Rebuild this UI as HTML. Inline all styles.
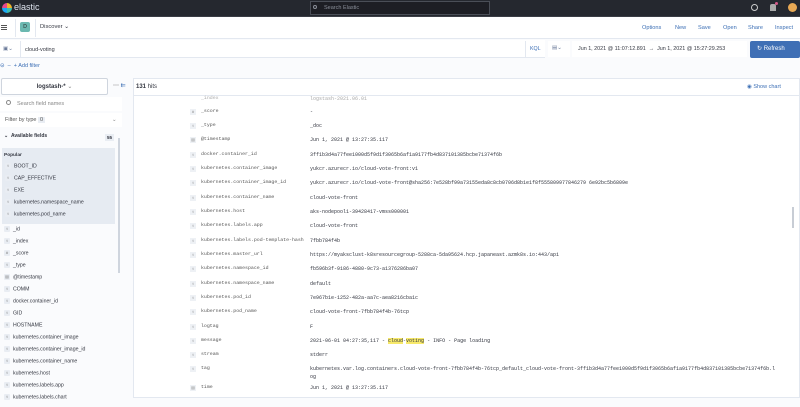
<!DOCTYPE html>
<html><head><meta charset="utf-8"><style>
*{margin:0;padding:0;box-sizing:border-box}
body{width:800px;height:407px;overflow:hidden;background:#fafbfd;font-family:"Liberation Sans",sans-serif;position:relative;color:#343741}
.a{position:absolute;white-space:nowrap}
.top{left:0;top:0;width:800px;height:17px;background:#25282f;border-bottom:1px solid #3a3d45}
.hdr{left:0;top:17px;width:800px;height:22px;background:#fff;border-bottom:1px solid #e3e8f0}
.lnk{color:#3c6fb5;font-size:5.6px;top:25px}
.fi{font-size:5.2px;color:#343741;left:14px}
.ic{display:inline-block;width:6px;height:6px;background:#e9edf3;border-radius:1px;font-size:4px;color:#777;text-align:center;line-height:6px;margin-right:3px;vertical-align:middle}
.fn{font-family:"Liberation Mono",monospace;font-size:4.9px;color:#555;left:201px}
.fv{font-family:"Liberation Mono",monospace;font-size:5px;color:#343741;left:310px}
.ri{left:190px;width:6px;height:6px;background:#eef1f5;font-size:4px;color:#888;text-align:center;line-height:6px}
</style></head><body>
<div class="a top"></div>
<div class="a" style="left:2px;top:3px;width:10px;height:10px;border-radius:50%;background:conic-gradient(#f0b429 0 25%,#3ebeb0 0 50%,#1ba9f5 0 75%,#e8478b 0)"></div>
<div class="a" style="left:14px;top:2px;color:#dfe5ef;font-size:9px">elastic</div>
<div class="a" style="left:310px;top:1px;width:180px;height:14px;border:1px solid #4a4e57;background:#1d1e24;color:#8a8f99;font-size:5.5px;padding:3px 0 0 13px">Search Elastic</div>
<div class="a" style="left:313px;top:5px;width:4px;height:4px;border:1px solid #8a8f99;border-radius:50%"></div>
<div class="a" style="left:751px;top:4px;width:7px;height:7px;border:1px solid #ccc;border-radius:50%"></div>
<div class="a" style="left:770px;top:4px;width:6px;height:7px;background:#aaa;border-radius:2px 2px 0 0"></div>
<div class="a" style="left:775px;top:2px;width:3px;height:3px;background:#d55a8a;border-radius:50%"></div>
<div class="a" style="left:788px;top:3px;width:9px;height:9px;background:#e7a854;border-radius:50%"></div>
<div class="a hdr"></div>
<div class="a" style="left:1px;top:25px;width:6px;height:1px;background:#555;box-shadow:0 2px 0 #555,0 4px 0 #555"></div>
<div class="a" style="left:15px;top:19px;width:1px;height:18px;background:#e3e8f0"></div>
<div class="a" style="left:20px;top:22px;width:10px;height:10px;background:#6bb8b0;border-radius:2px;font-size:5px;text-align:center;line-height:10px;color:#222">D</div>
<div class="a" style="left:35px;top:19px;width:1px;height:18px;background:#e3e8f0"></div>
<div class="a" style="left:40px;top:24px;font-size:5.8px;color:#343741">Discover ⌄</div>
<div class="a lnk" style="left:642px">Options</div>
<div class="a lnk" style="left:675px">New</div>
<div class="a lnk" style="left:698px">Save</div>
<div class="a lnk" style="left:723px">Open</div>
<div class="a lnk" style="left:748px">Share</div>
<div class="a lnk" style="left:775px">Inspect</div>
<div class="a" style="left:0;top:40px;width:545px;height:18px;background:#fff;border-bottom:1px solid #e3e8f0"></div>
<div class="a" style="left:3px;top:46px;font-size:5.5px;color:#6a7a99">▣⌄</div>
<div class="a" style="left:20px;top:41px;width:1px;height:16px;background:#e3e8f0"></div>
<div class="a" style="left:25px;top:47px;font-size:5.5px">cloud-voting</div>
<div class="a" style="left:525px;top:41px;width:20px;height:16px;border-left:1px solid #e3e8f0;font-size:5.3px;color:#3c6fb5;padding:5px 0 0 4px">KQL</div>
<div class="a" style="left:548px;top:41px;width:22px;height:16px;background:#fff;font-size:5.5px;color:#6a7a99;padding:4px 0 0 4px">▤⌄</div>
<div class="a" style="left:572px;top:41px;width:175px;height:16px;background:#fff;font-size:5.4px;padding:5px 0 0 6px;color:#343741">Jun 1, 2021 @ 11:07:12.891 &nbsp;→&nbsp; Jun 1, 2021 @ 15:27:29.253</div>
<div class="a" style="left:750px;top:41px;width:50px;height:17px;background:#3f6fb5;border-radius:2px;color:#fff;font-size:6px;padding:4px 0 0 7px">↻ Refresh</div>
<div class="a" style="left:0;top:63px;font-size:5.5px;color:#3c6fb5">⊝ &nbsp;– &nbsp;+ Add filter</div>
<div class="a" style="left:1px;top:78px;width:107px;height:17px;background:#fff;border:1px solid #cfd5de;border-radius:2px;font-size:6px;font-weight:bold;text-align:center;padding-top:4px">logstash-* <span style="font-weight:normal;color:#888">⌄</span></div>
<div class="a" style="left:113px;top:82px;font-size:6px;color:#555">⋯ <span style="color:#3c6fb5">⇇</span></div>
<div class="a" style="left:0;top:97px;width:122px;height:14px;background:#fff;font-size:5.5px;color:#888;padding:4px 0 0 17px">Search field names</div>
<div class="a" style="left:6px;top:100px;width:5px;height:5px;border:1px solid #888;border-radius:50%"></div>
<div class="a" style="left:0;top:113px;width:122px;height:14px;background:#fff;font-size:5.5px;color:#555;padding:4px 0 0 5px">Filter by type <span style="background:#e9edf3;padding:0 2px">0</span><span style="position:absolute;left:112px;color:#888">⌄</span></div>
<div class="a" style="left:4px;top:133px;font-size:5px;font-weight:bold">⌄ &nbsp;Available fields</div>
<div class="a" style="left:105px;top:134px;font-size:4.5px;background:#e9edf3;padding:1px 2px;font-weight:bold">55</div>
<div class="a" style="left:118px;top:138px;width:2px;height:135px;background:#cfd5de"></div>
<div class="a" style="left:2px;top:148px;width:113px;height:76px;background:#e6ebf2"></div>
<div class="a" style="left:4px;top:153px;font-size:4.8px;font-weight:bold">Popular</div>
<div class="a fi" style="left:5px;top:163px"><span class="ic">t</span>BOOT_ID</div>
<div class="a fi" style="left:5px;top:175px"><span class="ic">t</span>CAP_EFFECTIVE</div>
<div class="a fi" style="left:5px;top:187px"><span class="ic">t</span>EXE</div>
<div class="a fi" style="left:5px;top:199px"><span class="ic">t</span>kubernetes.namespace_name</div>
<div class="a fi" style="left:5px;top:211px"><span class="ic">t</span>kubernetes.pod_name</div>
<div class="a fi" style="left:4px;top:226px"><span class="ic">t</span>_id</div>
<div class="a fi" style="left:4px;top:238px"><span class="ic">t</span>_index</div>
<div class="a fi" style="left:4px;top:250px"><span class="ic">#</span>_score</div>
<div class="a fi" style="left:4px;top:262px"><span class="ic">t</span>_type</div>
<div class="a fi" style="left:4px;top:274px"><span class="ic">▤</span>@timestamp</div>
<div class="a fi" style="left:4px;top:286px"><span class="ic">t</span>COMM</div>
<div class="a fi" style="left:4px;top:298px"><span class="ic">t</span>docker.container_id</div>
<div class="a fi" style="left:4px;top:310px"><span class="ic">t</span>GID</div>
<div class="a fi" style="left:4px;top:322px"><span class="ic">t</span>HOSTNAME</div>
<div class="a fi" style="left:4px;top:334px"><span class="ic">t</span>kubernetes.container_image</div>
<div class="a fi" style="left:4px;top:346px"><span class="ic">t</span>kubernetes.container_image_id</div>
<div class="a fi" style="left:4px;top:358px"><span class="ic">t</span>kubernetes.container_name</div>
<div class="a fi" style="left:4px;top:370px"><span class="ic">t</span>kubernetes.host</div>
<div class="a fi" style="left:4px;top:382px"><span class="ic">t</span>kubernetes.labels.app</div>
<div class="a fi" style="left:4px;top:394px"><span class="ic">t</span>kubernetes.labels.chart</div>
<div class="a" style="left:133px;top:78px;width:667px;height:320px;background:#fff;border:1px solid #e3e8f0"></div>
<div class="a" style="left:133px;top:95px;width:667px;height:1px;background:#e3e8f0"></div>
<div class="a" style="left:136px;top:84px;font-size:6px"><b>131</b> hits</div>
<div class="a" style="left:747px;top:84px;font-size:5.5px;color:#3c6fb5">◉ Show chart</div>
<div class="a" style="left:792px;top:207px;width:2px;height:21px;background:#c8cdd5"></div>
<div class="a fn" style="top:96px;color:#aaa">_index</div><div class="a fv" style="top:96px;color:#aaa">logstash-2021.06.01</div>
<div class="a ri" style="top:109px">#</div><div class="a fn" style="top:109px">_score</div><div class="a fv" style="top:109px">-</div>
<div class="a ri" style="top:123px">t</div><div class="a fn" style="top:123px">_type</div><div class="a fv" style="top:123px">_doc</div>
<div class="a ri" style="top:137px">▤</div><div class="a fn" style="top:137px">@timestamp</div><div class="a fv" style="top:137px">Jun 1, 2021 @ 13:27:35.117</div>
<div class="a ri" style="top:152px">t</div><div class="a fn" style="top:152px">docker.container_id</div><div class="a fv" style="top:152px">3ff1b3d4a77fee1000d5f9d1f3065b6af1a9177fb4d837101385bcbe71374f6b</div>
<div class="a ri" style="top:166px">t</div><div class="a fn" style="top:166px">kubernetes.container_image</div><div class="a fv" style="top:166px">yukcr.azurecr.io/cloud-vote-front:v1</div>
<div class="a ri" style="top:180px">t</div><div class="a fn" style="top:180px">kubernetes.container_image_id</div><div class="a fv" style="top:180px">yukcr.azurecr.io/cloud-vote-front@sha256:7e528bf99a73155eda8c8cb0706d8b1e1f8f555809977846279 6e92bc5b6809e</div>
<div class="a ri" style="top:195px">t</div><div class="a fn" style="top:195px">kubernetes.container_name</div><div class="a fv" style="top:195px">cloud-vote-front</div>
<div class="a ri" style="top:209px">t</div><div class="a fn" style="top:209px">kubernetes.host</div><div class="a fv" style="top:209px">aks-nodepool1-39428417-vmss000001</div>
<div class="a ri" style="top:223px">t</div><div class="a fn" style="top:223px">kubernetes.labels.app</div><div class="a fv" style="top:223px">cloud-vote-front</div>
<div class="a ri" style="top:238px">t</div><div class="a fn" style="top:238px">kubernetes.labels.pod-template-hash</div><div class="a fv" style="top:238px">7fbb784f4b</div>
<div class="a ri" style="top:252px">t</div><div class="a fn" style="top:252px">kubernetes.master_url</div><div class="a fv" style="top:252px">https://myaksclust-k8sresourcegroup-5288ca-5da95624.hcp.japaneast.azmk8s.io:443/api</div>
<div class="a ri" style="top:266px">t</div><div class="a fn" style="top:266px">kubernetes.namespace_id</div><div class="a fv" style="top:266px">fb596b3f-9186-4880-9c73-a1376286ba07</div>
<div class="a ri" style="top:281px">t</div><div class="a fn" style="top:281px">kubernetes.namespace_name</div><div class="a fv" style="top:281px">default</div>
<div class="a ri" style="top:295px">t</div><div class="a fn" style="top:295px">kubernetes.pod_id</div><div class="a fv" style="top:295px">7e967b1e-1252-482a-aa7c-aea8216cba1c</div>
<div class="a ri" style="top:309px">t</div><div class="a fn" style="top:309px">kubernetes.pod_name</div><div class="a fv" style="top:309px">cloud-vote-front-7fbb784f4b-76tcp</div>
<div class="a ri" style="top:324px">t</div><div class="a fn" style="top:324px">logtag</div><div class="a fv" style="top:324px">F</div>
<div class="a ri" style="top:338px">t</div><div class="a fn" style="top:338px">message</div><div class="a fv" style="top:338px">2021-06-01 04:27:35,117 - <span style="background:#f7e96a">cloud</span>-<span style="background:#f7e96a">voting</span> - INFO - Page loading</div>
<div class="a ri" style="top:352px">t</div><div class="a fn" style="top:352px">stream</div><div class="a fv" style="top:352px">stderr</div>
<div class="a ri" style="top:366px">t</div><div class="a fn" style="top:366px">tag</div><div class="a fv" style="top:366px;line-height:7.5px">kubernetes.var.log.containers.cloud-vote-front-7fbb784f4b-76tcp_default_cloud-vote-front-3ff1b3d4a77fee1000d5f9d1f3065b6af1a9177fb4d837101385bcbe71374f6b.l<br>og</div>
<div class="a ri" style="top:385px">▤</div><div class="a fn" style="top:385px">time</div><div class="a fv" style="top:385px">Jun 1, 2021 @ 13:27:35.117</div>
</body></html>
